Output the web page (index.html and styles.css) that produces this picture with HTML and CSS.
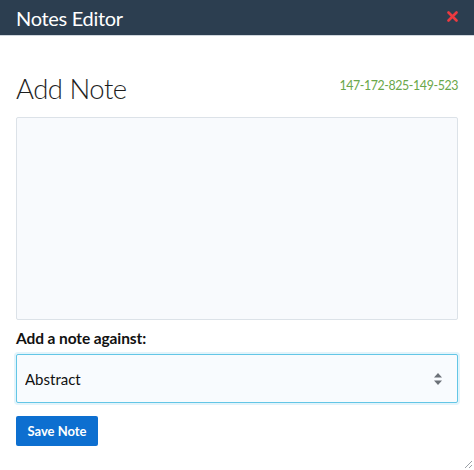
FILE: index.html
```html
<!DOCTYPE html>
<html lang="en">
<head>
    <meta charset="UTF-8">
    <meta name="viewport" content="width=device-width, initial-scale=1.0">
    <title>Notes Editor</title>
    <link rel="stylesheet" href="styles.css">
</head>
<body>
    <div id="dialog">
        <div class="bar">
            <span class="bar-title">Notes Editor</span>
            <svg class="close" width="11" height="11" viewBox="0 0 11 11">
                <path d="M1.5 1.5 L9.5 9.5 M9.5 1.5 L1.5 9.5" stroke="#ea3a40" stroke-width="2.6" stroke-linecap="round"/>
            </svg>
        </div>
        <div class="body">
            <div class="head">
                <h1>Add Note</h1>
                <span class="ref">147-172-825-149-523</span>
            </div>
            <textarea class="note"></textarea>
            <label class="lbl" for="target">Add a note against:</label>
            <div class="pick">
                <select id="target">
                    <option>Abstract</option>
                </select>
                <svg class="caret" width="10" height="14" viewBox="0 0 10 14">
                    <path d="M5 1 L9 5.5 H1 Z" fill="#6b7178"/>
                    <path d="M5 13 L9 8.5 H1 Z" fill="#6b7178"/>
                </svg>
            </div>
            <button class="save">Save Note</button>
        </div>
        <svg class="grip" width="10" height="10" viewBox="0 0 10 10">
            <path d="M9 2 L2 9 M9 6 L6 9" stroke="#9aa0a6" stroke-width="1" fill="none"/>
        </svg>
    </div>
</body>
</html>
```

FILE: styles.css
```css
*{
    margin: 0;
    padding: 0;
    box-sizing: border-box;
}
body{
    font-family: Lato, "Liberation Sans", sans-serif;
    background: #ffffff;
    color: #212529;
}
#dialog{
    width: 474px;
    height: 470px;
    position: relative;
}
.bar{
    height: 36px;
    background: #2c3e50;
    border-bottom: 1px solid #cfd6dd;
    display: flex;
    align-items: center;
    justify-content: space-between;
    padding: 0 16px 0 16px;
}
.bar-title{
    color: #ffffff;
    font-size: 20px;
    font-weight: 400;
    letter-spacing: -0.3px;
}
.close{
    display: block;
    margin-top: -2px;
}
.body{
    padding: 33px 16px 0;
}
.head{
    display: flex;
    justify-content: space-between;
    align-items: center;
    height: 38px;
}
h1{
    font-size: 27.5px;
    font-weight: 300;
    letter-spacing: -0.5px;
    color: #1e1e1e;
}
.ref{
    color: #6aa74a;
    font-size: 12.4px;
    letter-spacing: -0.4px;
    margin-top: -6px;
}
.note{
    display: block;
    width: 100%;
    height: 203px;
    margin-top: 10px;
    background: #f8fafd;
    border: 1px solid #dce2e8;
    border-radius: 2px;
    resize: none;
}
.lbl{
    display: block;
    font-weight: bold;
    font-size: 15.5px;
    letter-spacing: -0.1px;
    margin-top: 9px;
    color: #111;
}
.pick{
    position: relative;
    margin-top: 7px;
}
.pick select{
    display: block;
    width: 100%;
    height: 49px;
    appearance: none;
    -webkit-appearance: none;
    background: #f8fbfe;
    border: 1px solid #63c6e6;
    border-radius: 2px;
    box-shadow: 0 0 0 2px #e3f4fb;
    padding: 0 8px;
    font-family: Lato, "Liberation Sans", sans-serif;
    font-size: 15px;
    color: #111;
    outline: none;
}
.caret{
    position: absolute;
    right: 15px;
    top: 18px;
}
.save{
    margin-top: 13px;
    width: 82px;
    height: 30px;
    background: #0d6fd0;
    color: #ffffff;
    border: 0;
    border-radius: 2px;
    font-family: Lato, "Liberation Sans", sans-serif;
    font-size: 13px;
    font-weight: bold;
}
.grip{
    position: absolute;
    right: 1px;
    bottom: 1px;
}
```
